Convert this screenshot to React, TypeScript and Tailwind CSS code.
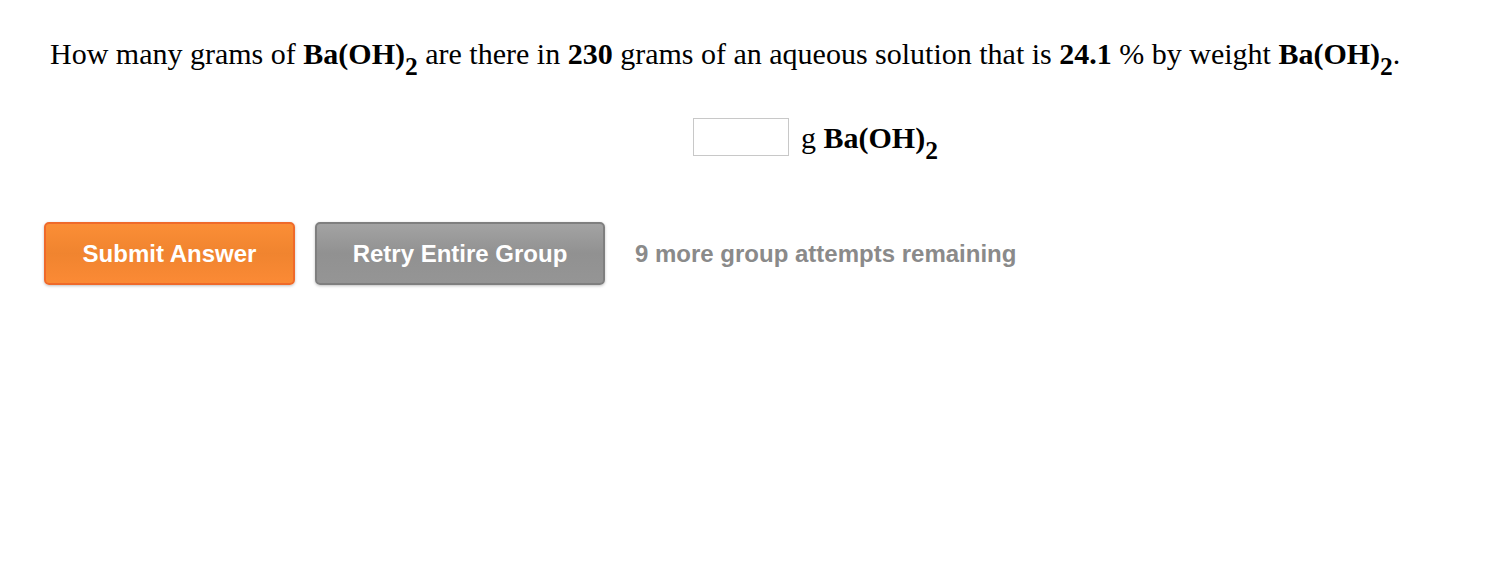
import React from "react";

const serif = { fontFamily: '"Liberation Serif", "Times New Roman", serif' };

function BaOH2() {
  return (
    <b className="font-bold">
      Ba(OH)<sub className="text-[0.85em] align-[-0.2em] leading-none">2</sub>
    </b>
  );
}

export default function App() {
  return (
    <div className="bg-white w-[1502px] h-[574px] text-black">
      <div className="pt-[36px] pl-[50px] text-[30px] leading-[36px]" style={serif}>
        How many grams of <BaOH2 /> are there in <b>230</b> grams of an aqueous
        solution that is <b>24.1</b> % by weight <BaOH2 />.
      </div>

      <div className="flex items-center mt-[44px] pl-[693px]" style={serif}>
        <input
          type="text"
          className="w-[96px] h-[38px] border border-[#c8c8c8] bg-white outline-none"
        />
        <span className="ml-[12px] text-[30px] leading-[36px] mt-[2px]">
          g <BaOH2 />
        </span>
      </div>

      <div
        className="flex items-center mt-[65px] pl-[44px]"
        style={{ fontFamily: '"Liberation Sans", Arial, sans-serif' }}
      >
        <button className="w-[251px] h-[63px] rounded-[5px] border-2 border-[#ef6a2a] bg-gradient-to-b from-[#fb8e36] via-[#f0842f] to-[#fb8a35] text-white font-bold text-[24px] shadow-[0_1px_3px_rgba(0,0,0,0.25)]">
          Submit Answer
        </button>
        <button className="ml-[20px] w-[290px] h-[63px] rounded-[5px] border-2 border-[#7f7f7f] bg-gradient-to-b from-[#a3a3a3] via-[#919191] to-[#959595] text-white font-bold text-[24px] shadow-[0_1px_3px_rgba(0,0,0,0.25)]">
          Retry Entire Group
        </button>
        <span className="ml-[30px] text-[24px] font-bold text-[#8a8a8a]">
          9 more group attempts remaining
        </span>
      </div>
    </div>
  );
}
